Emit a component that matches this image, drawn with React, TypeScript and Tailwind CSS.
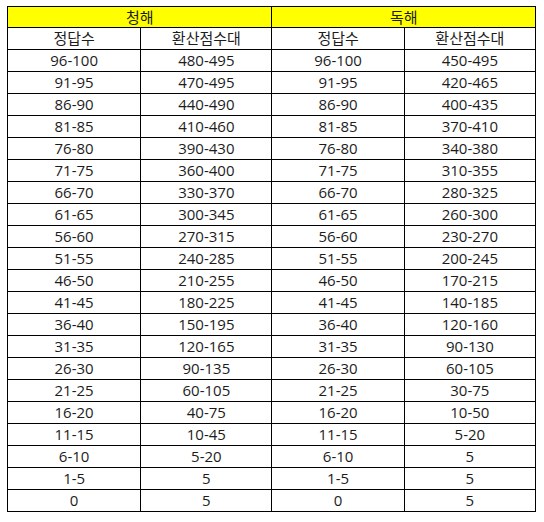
import React from "react";

const rows: [string, string, string][] = [
  ["96-100", "480-495", "450-495"],
  ["91-95", "470-495", "420-465"],
  ["86-90", "440-490", "400-435"],
  ["81-85", "410-460", "370-410"],
  ["76-80", "390-430", "340-380"],
  ["71-75", "360-400", "310-355"],
  ["66-70", "330-370", "280-325"],
  ["61-65", "300-345", "260-300"],
  ["56-60", "270-315", "230-270"],
  ["51-55", "240-285", "200-245"],
  ["46-50", "210-255", "170-215"],
  ["41-45", "180-225", "140-185"],
  ["36-40", "150-195", "120-160"],
  ["31-35", "120-165", "90-130"],
  ["26-30", "90-135", "60-105"],
  ["21-25", "60-105", "30-75"],
  ["16-20", "40-75", "10-50"],
  ["11-15", "10-45", "5-20"],
  ["6-10", "5-20", "5"],
  ["1-5", "5", "5"],
  ["0", "5", "5"],
];

const cell = "border border-black text-center p-0 leading-none";

export default function App() {
  return (
    <div
      className="w-[544px] h-[522px] bg-white pt-[6px] pl-[7px] text-[15px] text-[#1c1c1c]"
      style={{ fontFamily: '"Open Sans", "Noto Sans CJK KR", sans-serif' }}
    >
      <table className="border-collapse table-fixed w-[529px]">
        <colgroup>
          <col className="w-[133px]" />
          <col className="w-[131px]" />
          <col className="w-[132px]" />
          <col className="w-[131px]" />
        </colgroup>
        <tbody>
          <tr className="h-[21px] bg-[#ffff00]">
            <td colSpan={2} className={cell}>청해</td>
            <td colSpan={2} className={cell}>독해</td>
          </tr>
          <tr className="h-[22px]">
            <td className={cell}>정답수</td>
            <td className={cell}>환산점수대</td>
            <td className={cell}>정답수</td>
            <td className={cell}>환산점수대</td>
          </tr>
          {rows.map((r, i) => (
            <tr key={i} className="h-[22px]">
              <td className={cell}>{r[0]}</td>
              <td className={cell}>{r[1]}</td>
              <td className={cell}>{r[0]}</td>
              <td className={cell}>{r[2]}</td>
            </tr>
          ))}
        </tbody>
      </table>
    </div>
  );
}
